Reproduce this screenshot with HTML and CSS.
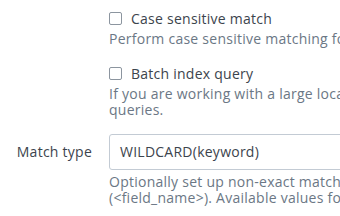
FILE: index.html
```html
<!DOCTYPE html>
<html>
<head>
<meta charset="utf-8">
<link rel="stylesheet" href="styles.css">
</head>
<body>
<div class="form">
  <div class="row">
    <div class="label"></div>
    <div class="control">
      <label class="check"><span class="box"></span><span>Case sensitive match</span></label>
      <p class="help">Perform case sensitive matching for all lookup fields in this definition.</p>
    </div>
  </div>
  <div class="row">
    <div class="label"></div>
    <div class="control">
      <label class="check"><span class="box"></span><span>Batch index query</span></label>
      <p class="help">If you are working with a large local lookup, you may want to turn on batch index<br>queries.</p>
    </div>
  </div>
  <div class="row row-field">
    <div class="label">Match type</div>
    <div class="control">
      <div class="input">WILDCARD(keyword)</div>
      <p class="help">Optionally set up non-exact matching for a subset of input fields, in the form<br>(&lt;field_name&gt;). Available values for match_type are WILDCARD, CIDR, and EXACT.</p>
    </div>
  </div>
</div>
</body>
</html>
```

FILE: styles.css
```css
html, body {
  margin: 0;
  padding: 0;
  background: #ffffff;
  overflow: hidden;
}
body {
  font-family: "Open Sans", "Liberation Sans", sans-serif;
  font-size: 14px;
  letter-spacing: 0.25px;
  color: #3c444d;
}
.form {
  width: 700px;
  padding-top: 8px;
}
.row {
  display: grid;
  grid-template-columns: 92px 1fr;
  column-gap: 17px;
  margin-bottom: 16px;
}
.row-field {
  margin-top: 4px;
}
.label {
  text-align: right;
  line-height: 36px;
  white-space: nowrap;
}
.control {
  min-width: 0;
}
.check {
  display: flex;
  align-items: center;
  gap: 9px;
  height: 20px;
}
.box {
  width: 11px;
  height: 11px;
  border: 1px solid #8c959f;
  border-radius: 2px;
  background: #fff;
  flex: none;
}
.help {
  margin: 3px 0 0;
  color: #6b7785;
  line-height: 16px;
  white-space: nowrap;
}
.input {
  height: 34px;
  border: 1px solid #c3cbd4;
  border-radius: 3px;
  line-height: 34px;
  padding: 0 10px;
  color: #3c444d;
}
.row-field .help {
  margin-top: 4px;
}
```
